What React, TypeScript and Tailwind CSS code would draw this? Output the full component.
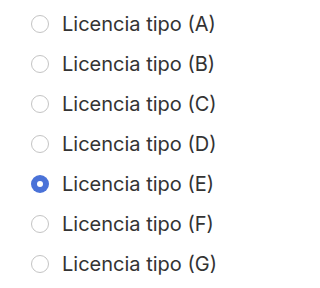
import React from 'react';

const options = ['A', 'B', 'C', 'D', 'E', 'F', 'G'];

const App: React.FC = () => {
  const selected = 'E';
  return (
    <main className="w-[260px] h-[288px] bg-white pt-[4px] pl-[31px]" style={{ fontFamily: 'Inter, sans-serif' }}>
      {options.map((o) => (
        <label key={o} className="flex items-center h-10 gap-[13px]">
          {o === selected ? (
            <span className="w-[18px] h-[18px] rounded-full bg-[#4a72d8] flex items-center justify-center">
              <span className="w-[6px] h-[6px] rounded-full bg-white" />
            </span>
          ) : (
            <span className="w-[18px] h-[18px] rounded-full border border-[#c4c4c4] bg-white" />
          )}
          <span className="text-[20px] text-[#333333] leading-none">Licencia tipo ({o})</span>
        </label>
      ))}
    </main>
  );
};

export default App;
